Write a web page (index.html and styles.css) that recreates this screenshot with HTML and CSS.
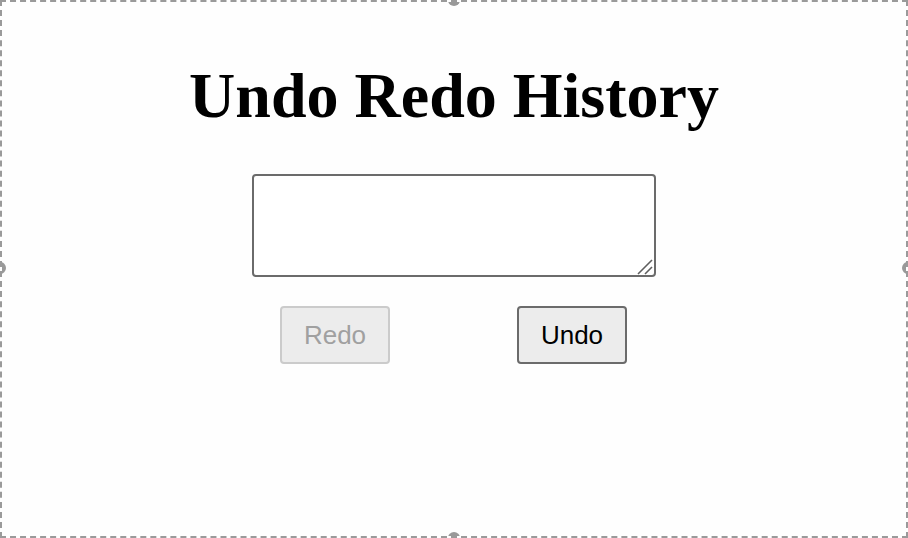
FILE: index.html
```html
<!DOCTYPE html>
<html>
<head>
<meta charset="utf-8">
<link rel="stylesheet" href="styles.css">
</head>
<body>
<div class="frame">
  <span class="handle handle-top"></span>
  <span class="handle handle-bottom"></span>
  <span class="handle handle-left"></span>
  <span class="handle handle-right"></span>
  <h1 class="title">Undo Redo History</h1>
  <div class="editor">
    <textarea class="input"></textarea>
    <svg class="grip" width="16" height="16" viewBox="0 0 16 16">
      <line x1="15" y1="1" x2="1" y2="15" stroke="#5f5f5f" stroke-width="1.6"/>
      <line x1="15" y1="8" x2="8" y2="15" stroke="#5f5f5f" stroke-width="1.6"/>
    </svg>
  </div>
  <div class="actions">
    <button class="btn btn-disabled" disabled>Redo</button>
    <button class="btn">Undo</button>
  </div>
</div>
</body>
</html>
```
FILE: styles.css
```css
html, body {
  margin: 0;
  padding: 0;
  background: #ffffff;
}
.frame {
  position: relative;
  width: 908px;
  height: 538px;
  box-sizing: border-box;
  border: 2px dashed #9a9a9a;
  overflow: hidden;
  display: flex;
  flex-direction: column;
  align-items: center;
  background: #fefefe;
}
.handle {
  position: absolute;
  width: 12px;
  height: 12px;
  border-radius: 50%;
  background: #999999;
}
.handle-top { top: -8px; left: 446px; }
.handle-bottom { bottom: -8px; left: 446px; }
.handle-left { left: -8px; top: 260px; }
.handle-right { right: -8px; top: 260px; }
.title {
  margin: 57px 0 0 0;
  font-family: "Liberation Serif", "Times New Roman", serif;
  font-weight: bold;
  font-size: 64px;
  line-height: 74px;
  color: #000;
}
.editor {
  position: relative;
  margin-top: 41px;
  width: 404px;
  height: 103px;
}
.input {
  display: block;
  box-sizing: border-box;
  width: 404px;
  height: 103px;
  margin: 0;
  border: 2px solid #6b6b6b;
  border-radius: 4px;
  resize: none;
  background: #fff;
  outline: none;
}
.grip {
  position: absolute;
  right: 3px;
  bottom: 2px;
}
.actions {
  margin-top: 29px;
  margin-right: 1px;
  display: flex;
  gap: 127px;
}
.btn {
  box-sizing: border-box;
  width: 110px;
  height: 58px;
  border: 2px solid #6b6b6b;
  border-radius: 4px;
  background: #ececec;
  color: #000;
  font-family: "Liberation Sans", Arial, sans-serif;
  font-size: 26px;
  padding: 0;
}
.btn-disabled {
  border-color: #cbcbcb;
  color: #a0a0a0;
  background: #ececec;
}
```
